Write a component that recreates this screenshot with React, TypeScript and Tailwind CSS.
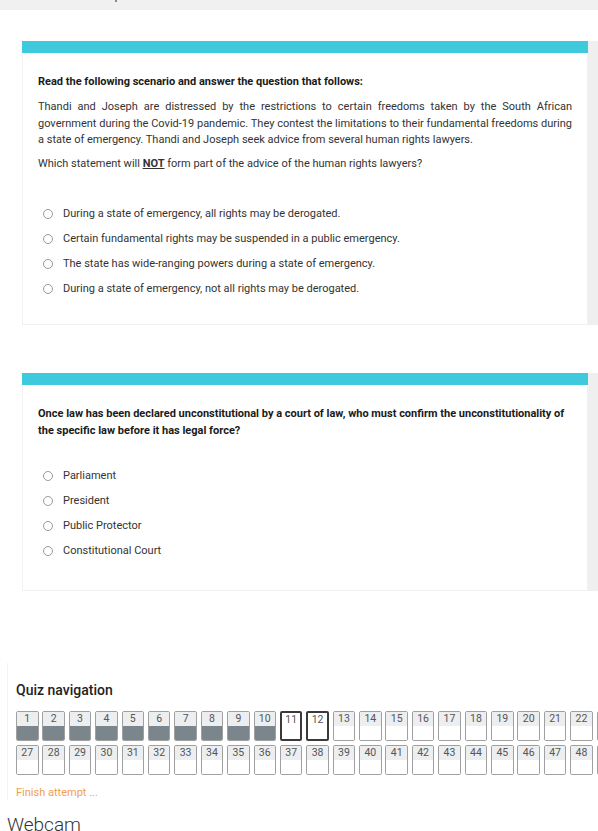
import { Fragment } from 'react';

const Q1_OPTIONS = [
  'During a state of emergency, all rights may be derogated.',
  'Certain fundamental rights may be suspended in a public emergency.',
  'The state has wide-ranging powers during a state of emergency.',
  'During a state of emergency, not all rights may be derogated.',
];

const Q2_OPTIONS = ['Parliament', 'President', 'Public Protector', 'Constitutional Court'];

// 26 per row; only the first 22 fit in the window, the 23rd just peeks in
const ROW1 = Array.from({ length: 23 }, (_, i) => i + 1);
const ROW2 = Array.from({ length: 23 }, (_, i) => i + 27);

function Radio({ label }: { label: string }) {
  return (
    <label className="flex items-center h-[25px] text-[11px] text-[#333]">
      <span className="w-[10px] h-[10px] rounded-full border border-[#9a9a9a] bg-white ml-[5px] mr-[10px] shrink-0" />
      {label}
    </label>
  );
}

function QuestionCard({ children }: { children: React.ReactNode }) {
  return (
    <div className="flex ml-[22px]">
      <div className="w-[566px] border border-[#f1f1f1] border-t-0 bg-white">
        <div className="h-[12px] bg-[#3ec9dc] -mx-px" />
        {children}
      </div>
      <div className="w-[10px] bg-[#efefef]" />
    </div>
  );
}

function NavButton({ n, hidden }: { n: number; hidden?: boolean }) {
  const answered = n <= 10;
  const current = n === 11 || n === 12;
  if (current) {
    return (
      <div className="w-[22.5px] h-[30px] shrink-0 rounded-[2px] border-2 border-[#3a3a3a] bg-white">
        <div className="text-[10.5px] leading-[13px] text-center text-[#555]">{n}</div>
      </div>
    );
  }
  return (
    <div className="w-[22.5px] h-[30px] shrink-0 rounded-[2px] border border-[#a0a0a0] overflow-hidden flex flex-col bg-white">
      <div className="h-[14px] bg-[#eceef0] text-[10.5px] leading-[14px] text-center text-[#555]">
        {hidden ? '' : n}
      </div>
      <div className={`flex-1 ${answered ? 'bg-[#7a858c]' : 'bg-white'}`} />
    </div>
  );
}

export default function App() {
  return (
    <div className="w-[598px] h-[831px] overflow-hidden bg-white font-['Roboto',sans-serif]">
      <div className="h-[10px] bg-[#f0f0f0] relative">
        <span className="absolute left-[115px] top-0 w-[2px] h-[2px] bg-[#888]" />
      </div>

      <div className="pt-[31px]">
        <QuestionCard>
          <div className="px-[15px] pt-[20px] pb-[22px]">
            <p className="text-[11px] leading-[17px] font-bold text-[#1a1a1a]">
              Read the following scenario and answer the question that follows:
            </p>
            <p className="mt-[9px] text-[11px] leading-[16.5px] text-[#333] text-justify">
              Thandi and Joseph are distressed by the restrictions to certain freedoms taken by the South African
              government during the Covid-19 pandemic. They contest the limitations to their fundamental freedoms during
              a state of emergency. Thandi and Joseph seek advice from several human rights lawyers.
            </p>
            <p className="mt-[6px] text-[11px] leading-[17px] text-[#333]">
              Which statement will <span className="font-bold underline">NOT</span> form part of the advice of the human
              rights lawyers?
            </p>
            <div className="mt-[30px] flex flex-col">
              {Q1_OPTIONS.map((o) => (
                <Radio key={o} label={o} />
              ))}
            </div>
          </div>
        </QuestionCard>

        <div className="h-[48px]" />

        <QuestionCard>
          <div className="px-[15px] pt-[20px] pb-[26px]">
            <p className="text-[11px] leading-[17px] font-bold text-[#1a1a1a]">
              Once law has been declared unconstitutional by a court of law, who must confirm the unconstitutionality of
              the specific law before it has legal force?
            </p>
            <div className="mt-[25px] flex flex-col">
              {Q2_OPTIONS.map((o) => (
                <Radio key={o} label={o} />
              ))}
            </div>
          </div>
        </QuestionCard>
      </div>

      <div className="mt-[72px] ml-[7px] border-l border-[#f3f3f3] pl-[8px] pt-[18px]">
        <h2 className="text-[14px] leading-[18px] font-medium text-[#222]">Quiz navigation</h2>
        <div className="mt-[12px] flex flex-col gap-[4px]">
          {[ROW1, ROW2].map((row, i) => (
            <Fragment key={i}>
              <div className="flex gap-[3.9px]">
                {row.map((n, j) => (
                  <NavButton key={n} n={n} hidden={j === row.length - 1} />
                ))}
              </div>
            </Fragment>
          ))}
        </div>
        <p className="mt-[11px] text-[11px] leading-[14px] text-[#f0a04b]">Finish attempt ...</p>
      </div>
      <h2 className="mt-[14px] ml-[7px] text-[19px] leading-[22px] font-light text-[#333]">Webcam</h2>
    </div>
  );
}
